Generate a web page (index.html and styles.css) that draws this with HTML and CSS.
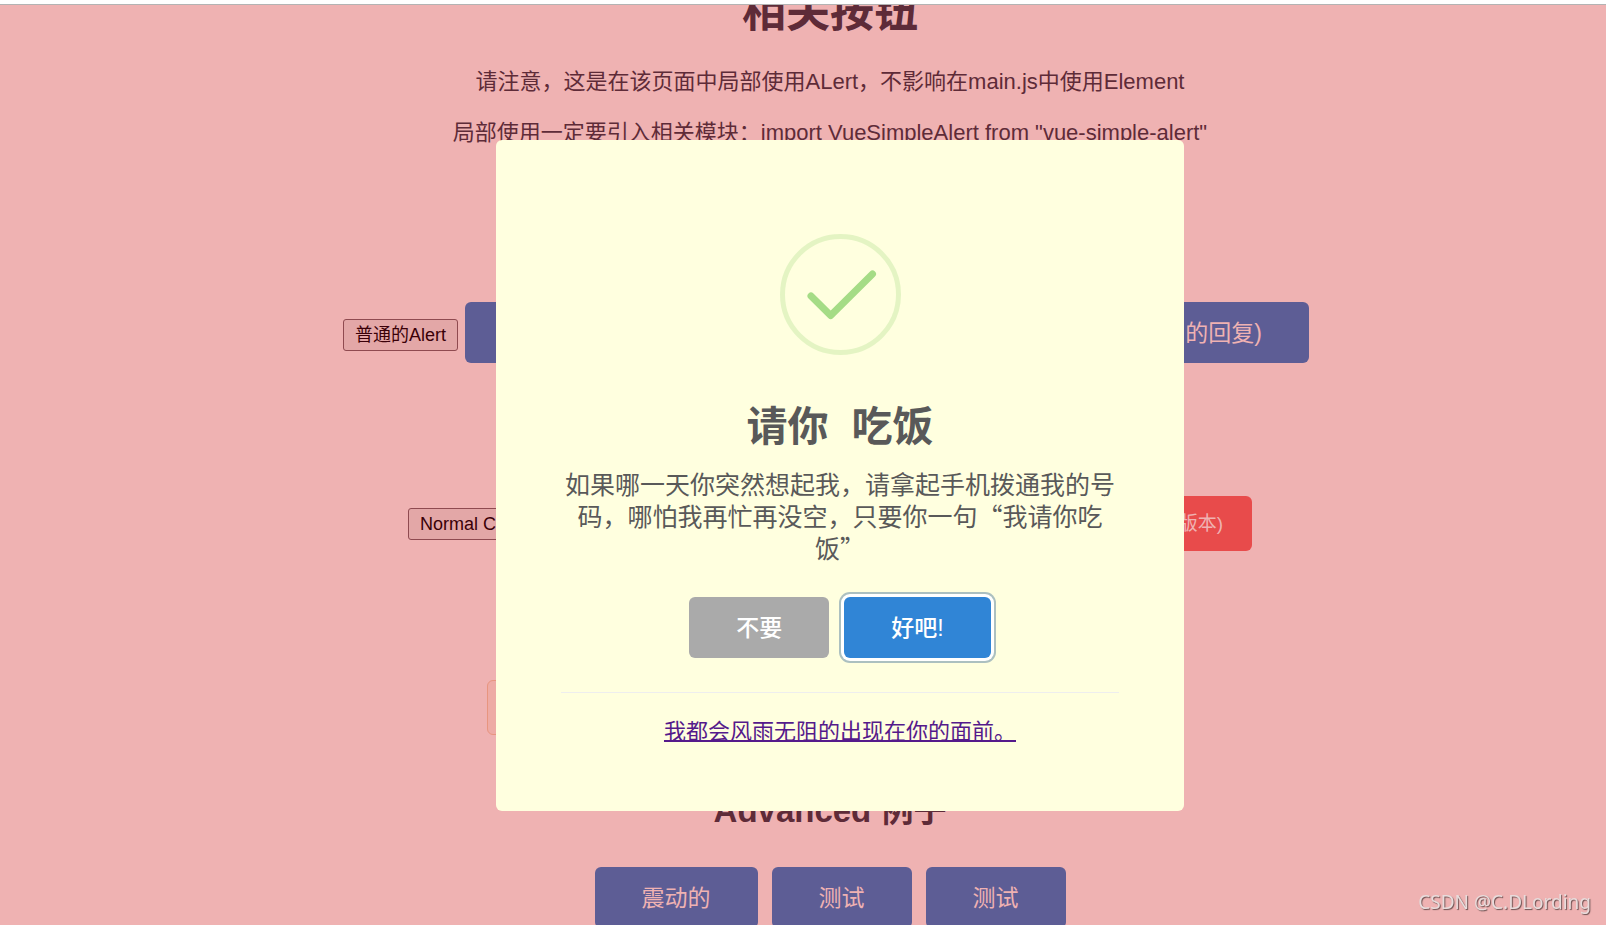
FILE: index.html
```
<!DOCTYPE html>
<html lang="zh-CN">
<head>
    <meta charset="UTF-8">
    <meta name="viewport" content="width=device-width, initial-scale=1.0">
    <title>vue-simple-alert</title>
    <link rel="stylesheet" href="styles.css">
</head>
<body>
    <main class="page">
        <h1>相关按钮</h1>
        <p>请注意，这是在该页面中局部使用ALert，不影响在main.js中使用Element</p>
        <p>局部使用一定要引入相关模块：import VueSimpleAlert from "vue-simple-alert"</p>

        <div class="row row-alert">
            <button type="button" class="btn-plain">普通的Alert</button>
            <button type="button" class="btn-main btn-wide">的回复)</button>
        </div>

        <div class="row row-confirm">
            <button type="button" class="btn-plain">Normal Confirm</button>
            <button type="button" class="btn-danger btn-wide">版本)</button>
        </div>

        <div class="row row-prompt">
            <button type="button" class="btn-outline btn-wide" aria-label="Prompt"></button>
        </div>

        <h2>Advanced 例子</h2>
        <div class="row row-advanced">
            <button type="button" class="btn-main">震动的</button>
            <button type="button" class="btn-main">测试</button>
            <button type="button" class="btn-main">测试</button>
        </div>
    </main>

    <!-- 弹窗 -->
    <div class="overlay">
        <div class="modal" role="dialog" aria-modal="true" aria-labelledby="modal-title">
            <svg class="modal-icon" viewBox="0 0 121 121" aria-hidden="true">
                <circle cx="60.5" cy="60.5" r="58" fill="none" stroke="#a5dc86" stroke-opacity="0.3" stroke-width="5"/>
                <path d="M31 62 L50.7 81.5 L92.5 40" fill="none" stroke="#a5dc86" stroke-width="7" stroke-linecap="round" stroke-linejoin="round"/>
            </svg>
            <h2 class="modal-title" id="modal-title">请你  吃饭</h2>
            <div class="modal-content">如果哪一天你突然想起我，请拿起手机拨通我的号码，哪怕我再忙再没空，只要你一句“我请你吃饭”</div>
            <div class="modal-actions">
                <button type="button" class="btn-modal btn-cancel">不要</button>
                <button type="button" class="btn-modal btn-confirm">好吧!</button>
            </div>
            <div class="modal-footer">
                <a href="#">我都会风雨无阻的出现在你的面前。</a>
            </div>
        </div>
    </div>

    <div class="watermark">CSDN @C.DLording</div>
</body>
</html>
```
FILE: styles.css
```
* {
    margin: 0;
    padding: 0;
    box-sizing: border-box;
}

body {
    height: 100vh;
    overflow: hidden;
    border-top: 4px solid #fff;
    background: #efb2b2;
    color: #5e2b38;
    font-family: "Liberation Sans", "Noto Sans CJK SC", sans-serif;
    font-size: 22px;
    line-height: 29px;
    text-align: center;
}

button {
    border: 0;
    font-family: inherit;
    white-space: nowrap;
    cursor: pointer;
}

.page {
    height: 100%;
    overflow: hidden;
    padding-left: 54px;
    border-top: 1px solid #b3b3b3;
}

h1 {
    margin: -22px 0 26px;
    font-size: 44px;
    line-height: 58px;
}

p {
    margin-bottom: 22px;
}

h2 {
    font-size: 33px;
    line-height: 44px;
}

/* 按钮行 */
.row {
    display: flex;
    justify-content: center;
    align-items: baseline;
    gap: 7px;
    margin: 0 auto;
}

.row-alert {
    max-width: 974px;
    margin-top: 155px;
    padding-right: 8px;
}

.row-confirm {
    max-width: 844px;
    margin-top: 133px;
}

.row-prompt {
    max-width: 686px;
    margin: 129px auto 54px;
}

.row-advanced {
    gap: 14px;
    margin-top: 34px;
}

.btn-plain {
    padding: 3px 11px;
    border: 1px solid #8f4a50;
    border-radius: 3px;
    background: #e3a7a7;
    color: #3a0008;
    font-size: 18px;
    line-height: 24px;
}

.btn-main {
    padding: 16px 47px 14px;
    border-radius: 6px;
    background: #5d5d95;
    color: #efb2b2;
    font-size: 23px;
    line-height: 31px;
}

.btn-wide {
    flex: 1;
    text-align: right;
}

.btn-danger {
    padding: 15px 29px;
    border-radius: 6px;
    background: #e84b4b;
    color: #efb2b2;
    font-size: 19px;
    line-height: 25px;
}

.btn-outline {
    height: 55px;
    border: 1px solid #e8957f;
    border-radius: 6px;
    background: #eeaba5;
}

/* 弹窗样式 */
.overlay {
    position: fixed;
    inset: 0;
    display: flex;
    justify-content: center;
    align-items: flex-start;
    padding: 140px 0 0 74px;
}

.modal {
    display: flex;
    flex-direction: column;
    align-items: center;
    width: 688px;
    padding: 94px 65px 65px;
    border-radius: 6px;
    background: #ffffdf;
    color: #595959;
}

.modal-icon {
    width: 121px;
    height: 121px;
    margin-bottom: 44px;
}

.modal-title {
    font-size: 41px;
    line-height: 56px;
    white-space: pre;
}

.modal-content {
    margin-top: 12px;
    font-family: "Noto Sans CJK SC", sans-serif;
    font-size: 25px;
    line-height: 32px;
}

.modal-actions {
    display: flex;
    gap: 15px;
    margin: 34px 0;
}

.btn-modal {
    padding: 16px 47px 14px;
    border-radius: 6px;
    color: #fff;
    font-size: 23px;
    font-weight: 500;
    line-height: 31px;
}

.btn-cancel {
    background: #aaa;
}

.btn-confirm {
    background: #3085d6;
    box-shadow: 0 0 0 3px #fff, 0 0 0 5px #acc0c0;
}

.modal-footer {
    align-self: stretch;
    padding-top: 24px;
    border-top: 1px solid #eee;
}

.modal-footer a {
    color: #551a8b;
    text-decoration-thickness: 2px;
}

.watermark {
    position: fixed;
    right: 15px;
    bottom: 8px;
    color: #e8dcdc;
    font-family: "Noto Sans", sans-serif;
    font-size: 19px;
    text-shadow: 1px 1px 1px #6b5050;
}
```
